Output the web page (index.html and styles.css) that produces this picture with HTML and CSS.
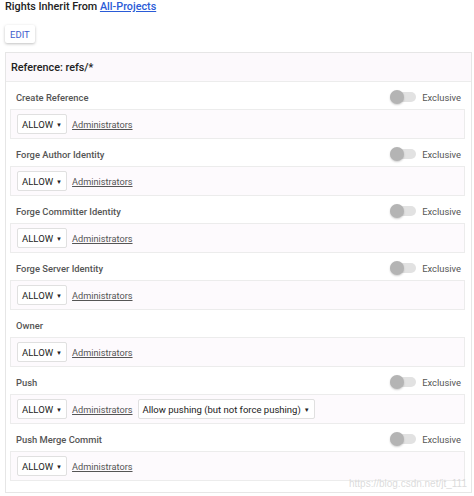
FILE: index.html
```html
<!DOCTYPE html>
<html>
<head>
<meta charset="utf-8">
<link rel="stylesheet" href="styles.css">
</head>
<body>
<div class="page">
  <div class="inherit">Rights Inherit From <a href="#" class="link">All-Projects</a></div>
  <button class="edit">EDIT</button>
  <div class="card">
    <div class="card-head">Reference: refs/*</div>
    <div class="perms">
      <div class="perm">
        <div class="perm-head"><span class="perm-name">Create Reference</span><span class="excl"><span class="toggle"><span class="knob"></span></span>Exclusive</span></div>
        <div class="rule"><span class="select">ALLOW <span class="caret">▼</span></span><a href="#" class="group">Administrators</a></div>
      </div>
      <div class="perm">
        <div class="perm-head"><span class="perm-name">Forge Author Identity</span><span class="excl"><span class="toggle"><span class="knob"></span></span>Exclusive</span></div>
        <div class="rule"><span class="select">ALLOW <span class="caret">▼</span></span><a href="#" class="group">Administrators</a></div>
      </div>
      <div class="perm">
        <div class="perm-head"><span class="perm-name">Forge Committer Identity</span><span class="excl"><span class="toggle"><span class="knob"></span></span>Exclusive</span></div>
        <div class="rule"><span class="select">ALLOW <span class="caret">▼</span></span><a href="#" class="group">Administrators</a></div>
      </div>
      <div class="perm">
        <div class="perm-head"><span class="perm-name">Forge Server Identity</span><span class="excl"><span class="toggle"><span class="knob"></span></span>Exclusive</span></div>
        <div class="rule"><span class="select">ALLOW <span class="caret">▼</span></span><a href="#" class="group">Administrators</a></div>
      </div>
      <div class="perm">
        <div class="perm-head"><span class="perm-name">Owner</span></div>
        <div class="rule"><span class="select">ALLOW <span class="caret">▼</span></span><a href="#" class="group">Administrators</a></div>
      </div>
      <div class="perm">
        <div class="perm-head"><span class="perm-name">Push</span><span class="excl"><span class="toggle"><span class="knob"></span></span>Exclusive</span></div>
        <div class="rule"><span class="select">ALLOW <span class="caret">▼</span></span><a href="#" class="group">Administrators</a><span class="select wide">Allow pushing (but not force pushing) <span class="caret">▼</span></span></div>
      </div>
      <div class="perm">
        <div class="perm-head"><span class="perm-name">Push Merge Commit</span><span class="excl"><span class="toggle"><span class="knob"></span></span>Exclusive</span></div>
        <div class="rule"><span class="select">ALLOW <span class="caret">▼</span></span><a href="#" class="group">Administrators</a></div>
      </div>
    </div>
    <div class="watermark">https://blog.csdn.net/jt_111</div>
  </div>
</div>
</body>
</html>
```
FILE: styles.css
```css
html, body {
  margin: 0;
  padding: 0;
  background: #fff;
}
body {
  font-family: Roboto, "Liberation Sans", sans-serif;
  color: #222;
}
.page {
  padding: 0 2px 0 5px;
}
.inherit {
  font-size: 10.8px;
  font-weight: 500;
  line-height: 13px;
  color: #222;
}
.link {
  color: #2a5bd7;
  text-decoration: underline;
}
.edit {
  display: block;
  margin-top: 12px;
  height: 18px;
  padding: 0 5px;
  border: none;
  border-radius: 2px;
  background: #fff;
  color: #3d5ccc;
  font-family: Roboto, "Liberation Sans", sans-serif;
  font-size: 9.5px;
  box-shadow: 0 1px 3px rgba(0,0,0,0.25);
}
.card {
  position: relative;
  margin-top: 9px;
  border: 1px solid #e6e6e6;
  padding-bottom: 11px;
}
.card-head {
  height: 28px;
  display: flex;
  align-items: center;
  padding-left: 5px;
  background: #fcf9fc;
  border-bottom: 1px solid #ececec;
  font-size: 10.8px;
  font-weight: 500;
}
.perms {
  padding: 0 6px 0 4px;
}
.perm-head {
  height: 24px;
  display: flex;
  align-items: center;
  justify-content: space-between;
  padding: 3px 4px 0 6px;
}
.perm-name {
  font-size: 9.4px;
  font-weight: 500;
  color: #555;
}
.excl {
  display: flex;
  align-items: center;
  font-size: 9.4px;
  color: #555;
}
.toggle {
  position: relative;
  width: 26px;
  height: 10px;
  border-radius: 5px;
  background: #e2e2e2;
  margin-right: 6px;
}
.knob {
  position: absolute;
  left: 0;
  top: -2px;
  width: 14px;
  height: 14px;
  border-radius: 50%;
  background: #b4b4b4;
  box-shadow: 0 1px 2px rgba(0,0,0,0.2);
}
.rule {
  height: 28px;
  display: flex;
  align-items: center;
  padding-left: 6px;
  border: 1px solid #ececec;
  background: #fdfafd;
}
.select {
  display: inline-flex;
  align-items: center;
  height: 18px;
  padding: 0 4px 0 4px;
  border: 1px solid #e0e0e0;
  border-radius: 2px;
  background: #fff;
  font-size: 9.5px;
  color: #222;
}
.caret {
  font-size: 6px;
  margin-left: 3px;
}
.group {
  margin-left: 5px;
  font-size: 9.2px;
  color: #555;
  text-decoration: underline;
}
.wide {
  margin-left: 5px;
}
.watermark {
  position: absolute;
  right: 4px;
  bottom: 3px;
  font-family: "Liberation Sans", sans-serif;
  font-size: 10px;
  color: rgba(215,215,215,0.9);
}
```
